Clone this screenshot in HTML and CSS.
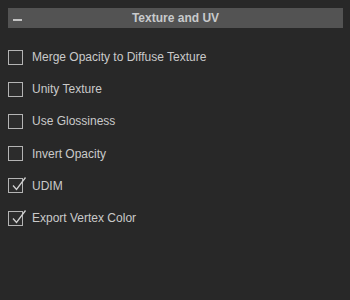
FILE: index.html
```html
<!DOCTYPE html>
<html lang="en">
<head>
    <meta charset="UTF-8">
    <title>Texture and UV</title>
    <link rel="stylesheet" href="styles.css">
</head>
<body>
    <div class="panel">
        <header class="panel-header">
            <span class="collapse"></span>
            <h2 class="panel-title">Texture and UV</h2>
        </header>

        <ul class="options">
            <li class="option"><span class="checkbox"></span>Merge Opacity to Diffuse Texture</li>
            <li class="option"><span class="checkbox"></span>Unity Texture</li>
            <li class="option"><span class="checkbox"></span>Use Glossiness</li>
            <li class="option"><span class="checkbox"></span>Invert Opacity</li>
            <li class="option">
                <span class="checkbox checked">
                    <svg class="tick" width="20" height="18" viewBox="0 0 20 18"><path d="M5 9.5L8.5 13.5L17.5 1.5" fill="none" stroke="currentColor" stroke-width="1.3"/></svg>
                </span>UDIM
            </li>
            <li class="option">
                <span class="checkbox checked">
                    <svg class="tick" width="20" height="18" viewBox="0 0 20 18"><path d="M5 9.5L8.5 13.5L17.5 1.5" fill="none" stroke="currentColor" stroke-width="1.3"/></svg>
                </span>Export Vertex Color
            </li>
        </ul>
    </div>
</body>
</html>
```

FILE: styles.css
```css
* {
    margin: 0;
    padding: 0;
    box-sizing: border-box;
    font-family: "Liberation Sans", Arial, sans-serif;
}

body {
    background-color: #282828;
    min-height: 100vh;
}

.panel {
    padding: 8px 7px 8px 8px;
}

/* Header */
.panel-header {
    height: 20px;
    background-color: #535353;
    display: flex;
    align-items: center;
    position: relative;
}

.collapse {
    position: absolute;
    left: 5px;
    top: 11px;
    width: 9px;
    height: 2px;
    background-color: #c4c4c4;
}

.panel-title {
    flex: 1;
    text-align: center;
    font-size: 12px;
    font-weight: bold;
    color: #c8cacc;
}

/* Options */
.options {
    list-style: none;
    padding-top: 13px;
}

.option {
    height: 32.2px;
    display: flex;
    align-items: center;
    gap: 9px;
    font-size: 12px;
    color: #cacaca;
}

.checkbox {
    width: 15px;
    height: 15px;
    border: 1px solid #b4b4b4;
    background-color: #2c2c2c;
    position: relative;
    flex-shrink: 0;
}

.tick {
    position: absolute;
    left: -1px;
    top: -3px;
    color: #d0d0d0;
    overflow: visible;
}
```
